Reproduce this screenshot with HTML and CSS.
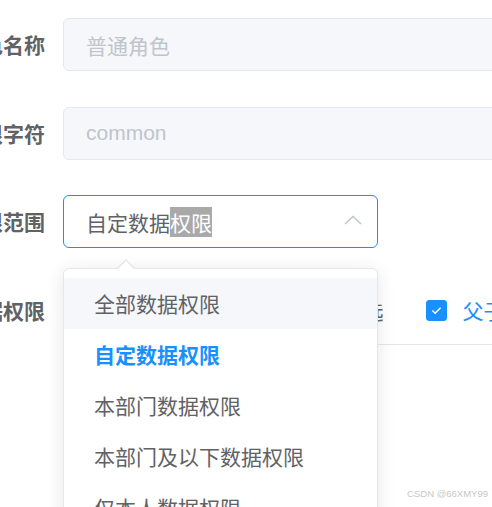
FILE: index.html
```html
<!DOCTYPE html>
<html lang="zh-CN">
<head>
<meta charset="utf-8">
<title>角色表单</title>
<link rel="stylesheet" href="styles.css">
</head>
<body>
<form class="form">
  <div class="form-item">
    <label class="label">角色名称</label>
    <div class="content">
      <div class="input disabled"><span class="placeholder">普通角色</span></div>
    </div>
  </div>
  <div class="form-item">
    <label class="label">权限字符</label>
    <div class="content">
      <div class="input disabled"><span class="placeholder latin">common</span></div>
    </div>
  </div>
  <div class="form-item">
    <label class="label">权限范围</label>
    <div class="content">
      <div class="select">
        <span class="select-value">自定数据<span class="sel">权限</span></span>
        <svg class="chevron" width="18" height="10" viewBox="0 0 18 10"><polyline points="1,9 9,1.5 17,9" fill="none" stroke="#c0c4cc" stroke-width="1.5"/></svg>
      </div>
      <div class="dropdown">
        <ul class="options">
          <li class="option hover">全部数据权限</li>
          <li class="option selected">自定数据权限</li>
          <li class="option">本部门数据权限</li>
          <li class="option">本部门及以下数据权限</li>
          <li class="option">仅本人数据权限</li>
        </ul>
      </div>
    </div>
  </div>
  <div class="form-item">
    <label class="label">数据权限</label>
    <div class="content">
      <div class="checks">
        <span class="cb"><span class="box"></span><span class="cb-label">展开/折叠</span></span>
        <span class="cb"><span class="box"></span><span class="cb-label">全选/全不选</span></span>
        <span class="cb checked"><span class="box"><svg width="21" height="21" viewBox="0 0 21 21"><polyline points="6,10.5 9,13.5 15,7.5" fill="none" stroke="#fff" stroke-width="1.6"/></svg></span><span class="cb-label">父子联动</span></span>
      </div>
      <div class="tree"></div>
    </div>
  </div>
</form>
<div class="watermark">CSDN @66XMY99</div>
</body>
</html>
```
FILE: styles.css
```css
html, body {
  margin: 0;
  padding: 0;
  height: 100%;
  overflow: hidden;
  background: #fff;
  font-family: "Noto Sans CJK SC", "Noto Sans", sans-serif;
}

.form {
  width: 760px;
  margin: 0 0 0 -75px;
  padding-top: 18px;
}

.form-item {
  display: flex;
  margin-bottom: 35.5px;
}

.label {
  flex: none;
  width: 138px;
  box-sizing: border-box;
  padding-right: 18px;
  text-align: right;
  font-size: 21px;
  font-weight: bold;
  line-height: 53px;
  color: #606266;
  white-space: nowrap;
  overflow: hidden;
}

.content {
  flex: 1;
  position: relative;
}

.input {
  box-sizing: border-box;
  height: 53px;
  border: 1px solid #e4e7ed;
  border-radius: 6px;
  padding: 0 22px;
  display: flex;
  align-items: center;
  font-size: 21px;
}

.input.disabled {
  background: #f5f7fa;
}

.placeholder {
  color: #c0c4cc;
}

.placeholder.latin {
  font-family: "Liberation Sans", "Noto Sans CJK SC", sans-serif;
  font-size: 21px;
}

.select {
  box-sizing: border-box;
  width: 315px;
  height: 53px;
  border: 1px solid #1890ff;
  border-radius: 6px;
  padding: 0 15px 0 22px;
  display: flex;
  align-items: center;
  justify-content: space-between;
  font-size: 21px;
  color: #606266;
}

.sel {
  background: #a9a9a9;
  color: #fff;
}

.chevron {
  margin-top: -4px;
}

.dropdown {
  position: absolute;
  left: 0;
  top: 73px;
  width: 315px;
  box-sizing: border-box;
  background: #fff;
  border: 1px solid #e4e7ed;
  border-radius: 6px;
  box-shadow: 0 3px 18px rgba(0, 0, 0, 0.1);
  z-index: 10;
}

.dropdown::before,
.dropdown::after {
  content: "";
  position: absolute;
  left: 53px;
  width: 0;
  height: 0;
  border-left: 9px solid transparent;
  border-right: 9px solid transparent;
}

.dropdown::before {
  top: -10px;
  border-bottom: 9px solid #e4e7ed;
}

.dropdown::after {
  top: -8.5px;
  border-bottom: 9px solid #fff;
}

.options {
  list-style: none;
  margin: 0;
  padding: 9px 0;
}

.option {
  height: 51px;
  line-height: 51px;
  padding: 0 30px;
  font-size: 21px;
  color: #606266;
  white-space: nowrap;
}

.option.hover {
  background: #f5f7fa;
}

.option.selected {
  color: #1890ff;
  font-weight: bold;
}

.checks {
  display: flex;
  align-items: center;
  height: 53px;
  white-space: nowrap;
}

.cb {
  display: flex;
  align-items: center;
  margin-right: 43px;
}

.box {
  box-sizing: border-box;
  width: 21px;
  height: 21px;
  border: 1px solid #dcdfe6;
  border-radius: 3px;
  background: #fff;
  display: flex;
  align-items: center;
  justify-content: center;
}

.cb.checked .box {
  background: #1890ff;
  border-color: #1890ff;
}

.box svg {
  display: block;
}

.cb-label {
  padding-left: 15px;
  font-size: 21px;
  color: #606266;
}

.cb.checked .cb-label {
  color: #1890ff;
}

.tree {
  margin-top: 7.5px;
  height: 220px;
  border: 1px solid #e5e6e7;
  border-radius: 6px;
}

.watermark {
  position: absolute;
  right: 4px;
  bottom: 8px;
  font-family: "Liberation Sans", sans-serif;
  font-size: 9.5px;
  color: #c8c8c8;
}
```
